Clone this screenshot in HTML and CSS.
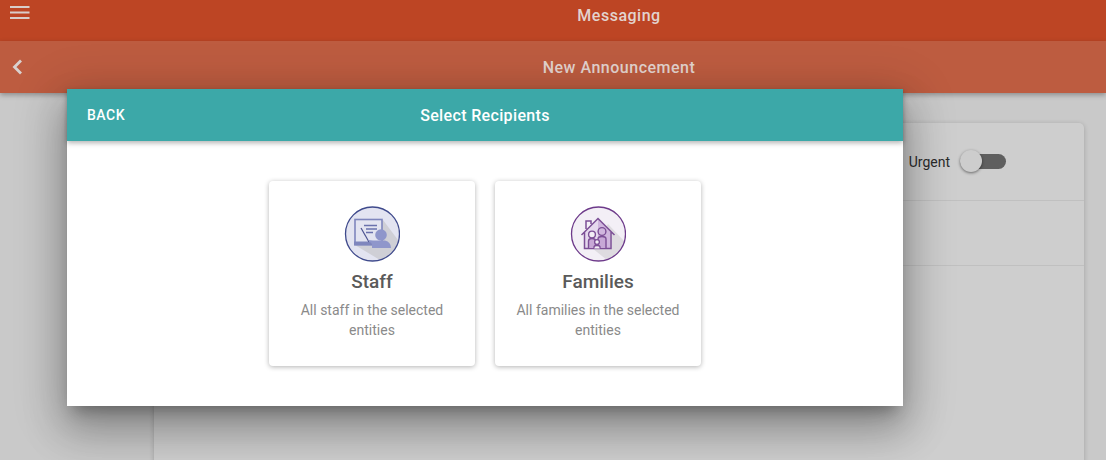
FILE: index.html
```html
<!DOCTYPE html>
<html lang="en">
<head>
  <meta charset="UTF-8">
  <meta name="viewport" content="width=device-width, initial-scale=1.0">
  <title>Messaging</title>
  <link rel="stylesheet" href="styles.css">
</head>
<body>
  <div class="app">
    <header class="top-bar">
      <button class="menu-btn" aria-label="Menu">
        <svg width="20" height="13" viewBox="0 0 20 13"><path d="M0 1h19.500M0 6.500h19.500M0 12h19.500" stroke="#d9cdc9" stroke-width="2" fill="none"/></svg>
      </button>
      <h1>Messaging</h1>
    </header>
    <div class="sub-bar">
      <button class="back-btn" aria-label="Back">
        <svg width="11" height="16" viewBox="0 0 11 16"><path d="M9 1.500 2.500 8 9 14.500" stroke="#d9d2cf" stroke-width="2.800" fill="none"/></svg>
      </button>
      <h2>New Announcement</h2>
    </div>
    <main class="content">
      <section class="form-card">
        <div class="form-row form-row-top">
          <span class="urgent-label">Urgent</span>
          <span class="toggle"><span class="toggle-thumb"></span></span>
        </div>
        <div class="form-row form-row-mid"></div>
      </section>
    </main>
  </div>

  <div class="dialog">
    <div class="dialog-head">
      <button class="dialog-back">BACK</button>
      <span class="dialog-title">Select Recipients</span>
    </div>
    <div class="dialog-body">
      <div class="pick-card">
        <svg class="pick-icon" width="56" height="56" viewBox="0 0 56 56">
          <circle cx="28.500" cy="28" r="27" fill="#e3e4f1"/>
          <path d="M11 39 39 14 54 34Q52 49 36 54Z" fill="#cfcfd6"/>
          <rect x="11" y="13.500" width="27" height="25" fill="#e3e4f1" stroke="#7f86bd" stroke-width="1.600"/>
          <rect x="10" y="35.500" width="29" height="4" fill="#7f86bd"/>
          <path d="M20 19.500h13M22 23h11M22 26.500h7" stroke="#6a71ad" stroke-width="1.300" fill="none"/>
          <path d="M17 22 25 36" stroke="#4b5290" stroke-width="1.200" fill="none"/>
          <circle cx="37" cy="29" r="5.800" fill="#8f96cb"/>
          <path d="M24 34 29 34.500H41Q47 36 47 42H28V38Z" fill="#8f96cb"/>
          <circle cx="28.500" cy="28" r="27" fill="none" stroke="#3f4a8c" stroke-width="1.300"/>
        </svg>
        <div class="pick-name">Staff</div>
        <p class="pick-desc">All staff in the selected entities</p>
      </div>
      <div class="pick-card">
        <svg class="pick-icon" width="56" height="56" viewBox="0 0 56 56">
          <circle cx="28.500" cy="28" r="27" fill="#f3eff6"/>
          <path d="M38 18 54 35Q51 49 37 54L22 42Z" fill="#dedbe0"/>
          <path d="M28 13 40 24V42H15V25Z" fill="#e6d9ee"/>
          <path d="M28 13 40 24V42H28Z" fill="#d0b6de"/>
          <path d="M11.500 29 28 12.500 44.500 29M14.500 26V42.500H41V26M16 23V15H21V18" stroke="#7c4f96" stroke-width="1.500" fill="none"/>
          <circle cx="22" cy="28.500" r="3.400" fill="#f3eff6" stroke="#7c4f96" stroke-width="1.400"/>
          <circle cx="32" cy="25.500" r="3.900" fill="#d0b6de" stroke="#7c4f96" stroke-width="1.400"/>
          <path d="M18.500 42V35Q18.500 32.500 22 32.500T25.500 35V42M28 42V33Q28 30.500 32 30.500T36 33V42" fill="#c7a8d6" stroke="#7c4f96" stroke-width="1.400"/>
          <circle cx="27" cy="36" r="2.400" fill="#f3eff6" stroke="#7c4f96" stroke-width="1.300"/>
          <path d="M24 42.500V41Q24 39.500 27 39.500T30 41V42.500" fill="#f3eff6" stroke="#7c4f96" stroke-width="1.300"/>
          <circle cx="28.500" cy="28" r="27" fill="none" stroke="#6d3a8a" stroke-width="1.300"/>
        </svg>
        <div class="pick-name">Families</div>
        <p class="pick-desc">All families in the selected entities</p>
      </div>
    </div>
  </div>
</body>
</html>
```

FILE: styles.css
```css
* {
  margin: 0;
  padding: 0;
  box-sizing: border-box;
}

html, body {
  height: 100%;
  overflow: hidden;
}

body {
  font-family: 'Roboto', Arial, sans-serif;
  background-color: #c9c9c9;
  color: #333;
}

button {
  font-family: inherit;
  background: none;
  border: none;
}

.app {
  height: 460px;
  overflow: hidden;
}

.top-bar {
  position: relative;
  height: 41px;
  padding-left: 132px;
  display: flex;
  align-items: center;
  justify-content: center;
  background-color: #bd4524;
}

.top-bar h1 {
  font-size: 16px;
  font-weight: 500;
  color: #e3d3ce;
  margin-top: -10px;
  letter-spacing: 0.5px;
}

.menu-btn {
  position: absolute;
  left: 10px;
  top: 6px;
  line-height: 0;
}

.sub-bar {
  position: relative;
  height: 52px;
  padding-left: 132px;
  display: flex;
  align-items: center;
  justify-content: center;
  background-color: #bd5c40;
  box-shadow: 0 2px 5px rgba(0, 0, 0, 0.3);
  z-index: 1;
}

.sub-bar h2 {
  font-size: 16px;
  font-weight: 500;
  color: #e3d3ce;
  letter-spacing: 0.5px;
}

.back-btn {
  position: absolute;
  left: 12px;
  top: 18px;
  line-height: 0;
}

.content {
  padding: 30px 22px 0 154px;
}

.form-card {
  height: 400px;
  background-color: #cecece;
  border-radius: 5px;
  box-shadow: 0 1px 5px rgba(0, 0, 0, 0.2);
}

.form-row {
  border-bottom: 1px solid #c0c0c0;
}

.form-row-top {
  height: 78px;
  padding-right: 78px;
  display: flex;
  align-items: center;
  justify-content: flex-end;
  gap: 10px;
}

.form-row-mid {
  height: 65px;
}

.urgent-label {
  font-size: 14px;
  color: #2b2b2b;
}

.toggle {
  position: relative;
  width: 46px;
  height: 15px;
  border-radius: 8px;
  background-color: #5f5f5f;
}

.toggle-thumb {
  position: absolute;
  left: 0;
  top: -4px;
  width: 22px;
  height: 22px;
  border-radius: 50%;
  background-color: #cdcdcd;
  box-shadow: 0 1px 3px rgba(0, 0, 0, 0.5);
}

.dialog {
  position: absolute;
  left: 67px;
  top: 89px;
  width: 836px;
  height: 317px;
  background-color: #fff;
  z-index: 2;
  box-shadow: 0 11px 15px -7px rgba(0, 0, 0, 0.3), 0 24px 38px 3px rgba(0, 0, 0, 0.22), 0 9px 46px 8px rgba(0, 0, 0, 0.16);
}

.dialog-head {
  position: relative;
  height: 52px;
  display: flex;
  align-items: center;
  justify-content: center;
  background-color: #3ca8a8;
  box-shadow: 0 2px 5px rgba(0, 0, 0, 0.3);
}

.dialog-back {
  position: absolute;
  left: 20px;
  top: 18px;
  font-size: 14px;
  font-weight: 500;
  letter-spacing: 0.5px;
  color: #fff;
}

.dialog-title {
  font-size: 16px;
  font-weight: 500;
  letter-spacing: 0.35px;
  color: #fff;
}

.dialog-body {
  display: flex;
  justify-content: center;
  gap: 20px;
  padding-top: 40px;
}

.pick-card {
  width: 206px;
  height: 185px;
  padding: 25px 20px 0;
  display: flex;
  flex-direction: column;
  align-items: center;
  text-align: center;
  background-color: #fff;
  border-radius: 4px;
  box-shadow: 0 1px 5px rgba(0, 0, 0, 0.3);
}

.pick-name {
  margin-top: 8px;
  font-size: 19px;
  font-weight: 500;
  line-height: 24px;
  color: #5a5a5a;
}

.pick-desc {
  margin-top: 6px;
  font-size: 14px;
  line-height: 20px;
  color: #8a8a8a;
}
```
